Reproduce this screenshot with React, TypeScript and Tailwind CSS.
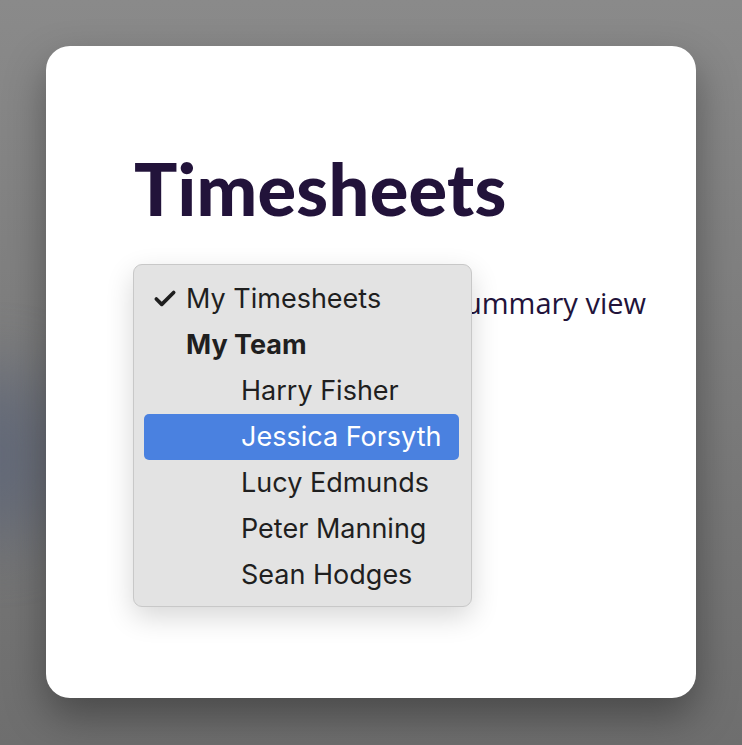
import { Check } from 'lucide-react'

const team = ['Harry Fisher', 'Jessica Forsyth', 'Lucy Edmunds', 'Peter Manning', 'Sean Hodges']

export default function App() {
  const selected = 'Jessica Forsyth'

  return (
    <div className="relative w-[742px] h-[745px] overflow-hidden bg-[linear-gradient(180deg,#8a8a8a_0%,#7c7c7c_50%,#6e6e6e_100%)]">
      {/* bluish glow behind left edge */}
      <div className="absolute left-[-70px] top-[370px] w-[130px] h-[170px] rounded-full bg-[#5a6378] blur-[35px] opacity-70" />

      <div className="absolute left-[46px] top-[46px] w-[650px] h-[652px] rounded-[24px] bg-white shadow-[0_18px_40px_rgba(0,0,0,0.35)] px-[88px] pt-[106px]">
        <h1 className="font-['Lato',sans-serif] font-black text-[72px] leading-[72px] text-[#22133a] tracking-[0.3px]">
          Timesheets
        </h1>

        <div className="relative mt-[58px] flex items-start h-[56px]">
          <div className="w-[314px] h-[44px] shrink-0" />
          <span className="mt-[6px] whitespace-nowrap font-['Open_Sans',sans-serif] font-medium text-[29px] text-[#22133a] tracking-[0px] leading-none">
            Summary view
          </span>

          {/* open select menu */}
          <div className="absolute left-[-1px] top-[-18px] w-[339px] rounded-[9px] bg-[#e3e3e3] border border-[#c8c8c8] shadow-[0_10px_28px_rgba(0,0,0,0.16)] pt-[11px] pb-[8px] font-['Inter',sans-serif] text-[27px] text-[#1f1f1f]">
            <div className="flex items-center h-[46px] pl-[18px]">
              <Check className="w-[26px] h-[26px] mr-[8px]" strokeWidth={3.4} />
              <span>My Timesheets</span>
            </div>
            <div className="flex items-center h-[46px] pl-[52px] font-bold">My Team</div>
            {team.map(name => (
              <div
                key={name}
                className={
                  name === selected
                    ? 'flex items-center h-[46px] ml-[10px] mr-[12px] pl-[97px] rounded-[5px] bg-[#4a81e0] text-white'
                    : 'flex items-center h-[46px] pl-[107px]'
                }
              >
                {name}
              </div>
            ))}
          </div>
        </div>
      </div>
    </div>
  )
}
